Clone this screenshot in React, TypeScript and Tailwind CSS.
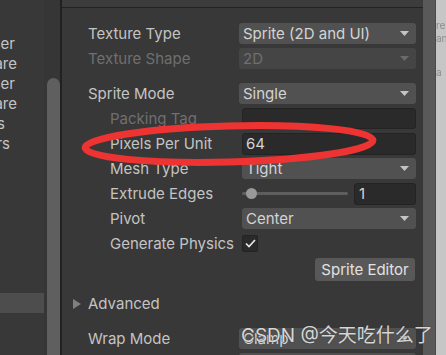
import React from 'react';

// visible tail of each clipped hierarchy name, and how far its end sits from the panel's right edge
const leftItems: [string, string][] = [
  ['Collider', 'pr-[29px]'],
  ['Software', 'pr-[27px]'],
  ['Render', 'pr-[29px]'],
  ['Hardware', 'pr-[27px]'],
  ['Assets', 'pr-[39px]'],
  ['Colliders', 'pr-[34px]'],
];

function Arrow({ dim }: { dim?: boolean }) {
  return (
    <svg width="9" height="5" viewBox="0 0 9 5" className="shrink-0">
      <path d="M0 0 H9 L4.5 5 Z" fill={dim ? '#6a6a6a' : '#c4c4c4'} />
    </svg>
  );
}

function Dropdown({ value, dim, indent }: { value: string; dim?: boolean; indent?: boolean }) {
  return (
    <div
      className={`flex h-[21px] items-center justify-between rounded-[3px] pl-[4px] pr-[7px] ${
        indent ? 'w-[174px]' : 'w-[177px]'
      } ${dim ? 'bg-[#454545] text-[#6f6f6f]' : 'bg-[#515151] text-[#d4d4d4]'}`}
    >
      <span className="whitespace-nowrap">{value}</span>
      <Arrow dim={dim} />
    </div>
  );
}

function Row({
  label,
  dim,
  indent,
  children,
}: {
  label: string;
  dim?: boolean;
  indent?: boolean;
  children?: React.ReactNode;
}) {
  return (
    <div className="flex h-[25px] shrink-0 items-center pl-[26px] pr-[7px]">
      <div
        className={`shrink-0 whitespace-nowrap ${indent ? 'w-[154px] pl-[22px]' : 'w-[151px]'} ${
          dim ? 'text-[#6f6f6f]' : 'text-[#c4c4c4]'
        }`}
      >
        {label}
      </div>
      {children}
    </div>
  );
}

export default function App() {
  return (
    <div className="relative flex h-[355px] w-[446px] overflow-hidden bg-[#383838] font-['Inter',sans-serif] text-[15px] leading-none">
      {/* hierarchy list, scrolled sideways so only the ends show */}
      <div className="w-[44px] shrink-0 overflow-hidden pt-[33px] text-[#c4c4c4]">
        {leftItems.map(([w, pad]) => (
          <div key={w} className={`flex h-[20px] items-center justify-end overflow-hidden ${pad}`}>
            <span className="shrink-0 whitespace-nowrap">{w}</span>
          </div>
        ))}
        <div className="mt-[140px] h-[20px] bg-[#4d4d4d]" />
      </div>

      {/* scrollbar */}
      <div className="flex w-[16px] shrink-0 flex-col bg-[#363636] pl-[3px] pt-[78px]">
        <div className="flex-1 rounded-t-[7px] bg-[#5f5f5f]" />
      </div>
      <div className="w-[2px] shrink-0 bg-[#212121]" />

      {/* inspector */}
      <div className="flex w-[361px] shrink-0 flex-col overflow-hidden">
        <div className="h-[8px] shrink-0 border-b border-[#232323] bg-[#3c3c3c]" />
        <div className="shrink-0 pt-[13px]">
          <Row label="Texture Type">
            <Dropdown value="Sprite (2D and UI)" />
          </Row>
          <Row label="Texture Shape" dim>
            <Dropdown value="2D" dim />
          </Row>
          <div className="mt-[10px]">
            <Row label="Sprite Mode">
              <Dropdown value="Single" />
            </Row>
          </div>
          <Row label="Packing Tag" dim indent>
            <div className="h-[21px] w-[174px] rounded-[3px] border border-[#232323] bg-[#2a2a2a]" />
          </Row>
          <Row label="Pixels Per Unit" indent>
            <div className="flex h-[22px] w-[174px] items-center rounded-[3px] border border-[#232323] bg-[#2a2a2a] pl-[3px] text-[#d4d4d4]">
              64
            </div>
          </Row>
          <Row label="Mesh Type" indent>
            <Dropdown value="Tight" indent />
          </Row>
          <Row label="Extrude Edges" indent>
            <div className="flex w-[174px] items-center">
              <div className="relative flex h-[11px] w-[106px] items-center">
                <div className="h-[3px] w-full rounded-full bg-[#5e5e5e]" />
                <div className="absolute left-[4px] top-0 h-[11px] w-[11px] rounded-full bg-[#999999]" />
              </div>
              <div className="ml-[6px] flex h-[22px] w-[62px] items-center rounded-[3px] border border-[#232323] bg-[#2a2a2a] pl-[4px] text-[#d4d4d4]">
                1
              </div>
            </div>
          </Row>
          <Row label="Pivot" indent>
            <Dropdown value="Center" indent />
          </Row>
          <Row label="Generate Physics" indent>
            <div className="flex h-[17px] w-[16px] items-center justify-center rounded-[2px] border border-[#232323] bg-[#2a2a2a]">
              <svg width="11" height="9" viewBox="0 0 11 9">
                <path d="M1 4.5 L4 7.5 L10 1" fill="none" stroke="#e8e8e8" strokeWidth="1.7" />
              </svg>
            </div>
          </Row>
          <div className="mt-[1px] flex h-[25px] items-center justify-end pr-[8px]">
            <div className="flex h-[23px] w-[100px] items-center justify-center rounded-[3px] bg-[#585858] text-[#e2e2e2]">
              Sprite Editor
            </div>
          </div>
          <div className="mt-[9px] flex h-[25px] items-center pl-[11px] text-[#c4c4c4]">
            <svg width="8" height="10" viewBox="0 0 8 10" className="mr-[7px]">
              <path d="M0 0 L8 5 L0 10 Z" fill="#7f7f7f" />
            </svg>
            Advanced
          </div>
          <div className="mt-[10px]">
            <Row label="Wrap Mode">
              <Dropdown value="Clamp" />
            </Row>
          </div>
          <div className="ml-[177px] mt-[2px] h-[21px] w-[177px] rounded-[3px] bg-[#515151]" />
        </div>
      </div>

      {/* right edge */}
      <div className="w-[12px] shrink-0 bg-[#595959]" />
      <div className="w-[1px] shrink-0 bg-[#4a4a4a]" />
      <div className="flex flex-1 flex-col overflow-hidden bg-[#c6c6c6] pt-[20px] text-[10px] text-[#8c8c8c] blur-[0.5px]">
        <span className="whitespace-nowrap">re'</span>
        <span className="mt-[3px] whitespace-nowrap">an</span>
        <span className="mt-[24px] whitespace-nowrap">a</span>
      </div>

      {/* annotation ellipse */}
      <svg className="pointer-events-none absolute left-0 top-0" width="446" height="355">
        <ellipse
          cx="229"
          cy="144"
          rx="144"
          ry="18"
          fill="none"
          stroke="#ee3433"
          strokeWidth="7"
          transform="rotate(-1.5 229 144)"
        />
      </svg>

      {/* watermark */}
      <div className="pointer-events-none absolute left-[241px] top-[326px] whitespace-nowrap font-['Inter','Noto_Sans_CJK_SC',sans-serif] text-[19px] leading-none text-white/80 [text-shadow:0_0_1px_#333,0_0_1px_#333]">
        CSDN @今天吃什么了
      </div>
    </div>
  );
}
